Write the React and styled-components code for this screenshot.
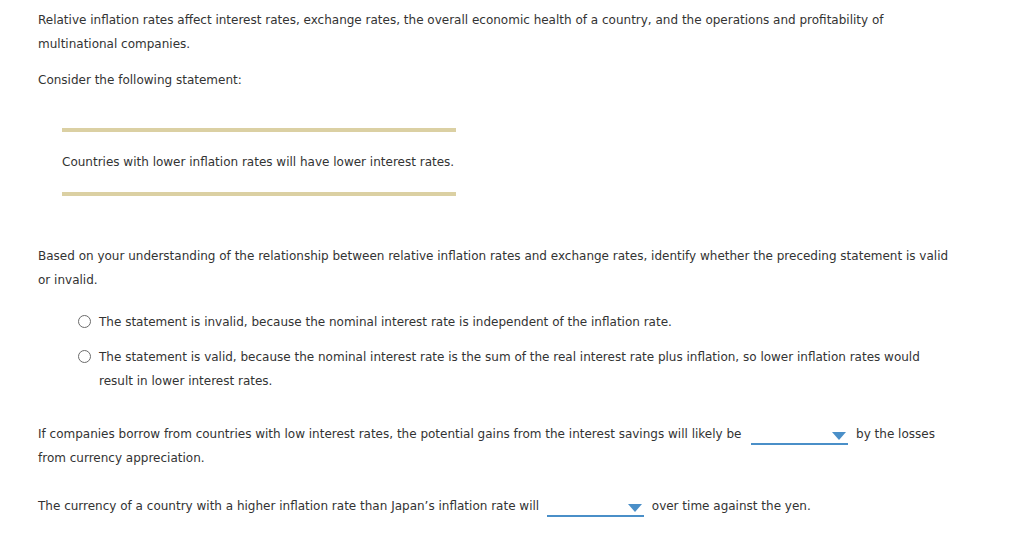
import React from 'react'
import styled, { createGlobalStyle } from 'styled-components'

const GlobalStyle = createGlobalStyle`
  body {
    margin: 0;
    background: #fff;
    font-family: 'DejaVu Sans', Verdana, sans-serif;
    font-size: 12px;
    color: #333;
  }
`

const Page = styled.div`
  padding: 8px 38px 20px;
  width: 1031px;
  box-sizing: border-box;
`

const Para = styled.p`
  margin: 0 0 ${(p) => p.gap || 12}px;
  line-height: 24px;
  max-width: 920px;
`

const Statement = styled.div`
  width: 394px;
  margin: 36px 0 48px 24px;
  border-top: 4px solid #dbd0a3;
  border-bottom: 4px solid #dbd0a3;
  padding: 18px 0 18px;
  line-height: 24px;
`

const Options = styled.div`
  display: flex;
  flex-direction: column;
  gap: 11px;
  margin: 18px 0 29px 40px;
`

const Option = styled.label`
  display: flex;
  align-items: flex-start;
  gap: 8px;
  max-width: 860px;
  line-height: 24px;
  cursor: pointer;
`

const Radio = styled.span`
  flex: none;
  width: 11px;
  height: 11px;
  margin-top: 5px;
  border: 1px solid #6b6b6b;
  border-radius: 50%;
  background: #fff;
`

const Select = styled.span`
  display: inline-block;
  position: relative;
  width: 97px;
  height: 17px;
  margin: 0 4px 0 ${(p) => p.left || 6}px;
  vertical-align: -7px;
  border-bottom: 2px solid #4a8fc8;
`

const Caret = styled.svg`
  position: absolute;
  right: 2px;
  top: 6px;
`

const Dropdown = ({ left }) => (
  <Select left={left}>
    <Caret width="14" height="8" viewBox="0 0 14 8">
      <polygon points="0,0 14,0 7,8" fill="#4a8fc8" />
    </Caret>
  </Select>
)

export default function App() {
  return (
    <>
      <GlobalStyle />
      <Page>
        <Para>
          Relative inflation rates affect interest rates, exchange rates, the overall economic health of a country, and the
          operations and profitability of multinational companies.
        </Para>
        <Para gap={0}>Consider the following statement:</Para>
        <Statement>Countries with lower inflation rates will have lower interest rates.</Statement>
        <Para gap={0}>
          Based on your understanding of the relationship between relative inflation rates and exchange rates, identify
          whether the preceding statement is valid or invalid.
        </Para>
        <Options>
          <Option>
            <Radio />
            <span>The statement is invalid, because the nominal interest rate is independent of the inflation rate.</span>
          </Option>
          <Option>
            <Radio />
            <span>
              The statement is valid, because the nominal interest rate is the sum of the real interest rate plus
              inflation, so lower inflation rates would result in lower interest rates.
            </span>
          </Option>
        </Options>
        <Para gap={24}>
          If companies borrow from countries with low interest rates, the potential gains from the interest savings will
          likely be <Dropdown left={6} /> by the losses from currency appreciation.
        </Para>
        <Para>
          The currency of a country with a higher inflation rate than Japan’s inflation rate will <Dropdown left={4} />{' '}
          over time against the yen.
        </Para>
      </Page>
    </>
  )
}
